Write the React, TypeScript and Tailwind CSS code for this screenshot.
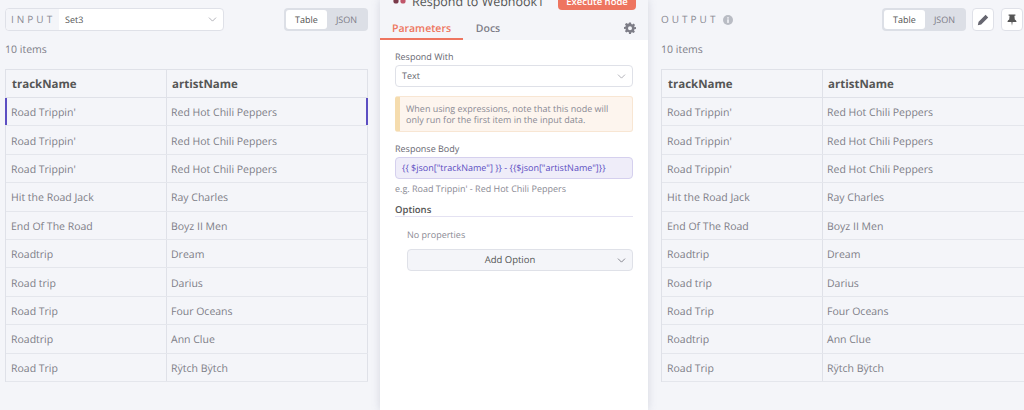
import React from "react";
import { ChevronDown } from "lucide-react";

const rows: [string, string][] = [
  ["Road Trippin'", "Red Hot Chili Peppers"],
  ["Road Trippin'", "Red Hot Chili Peppers"],
  ["Road Trippin'", "Red Hot Chili Peppers"],
  ["Hit the Road Jack", "Ray Charles"],
  ["End Of The Road", "Boyz II Men"],
  ["Roadtrip", "Dream"],
  ["Road trip", "Darius"],
  ["Road Trip", "Four Oceans"],
  ["Roadtrip", "Ann Clue"],
  ["Road Trip", "Rÿtch Bÿtch"],
];

function DataTable({ highlight, widthClass }: { highlight?: boolean; widthClass: string }) {
  return (
    <div className={`${widthClass} border-t border-l border-[#dfe1e8]`}>
      <div className="flex h-[28px] border-b border-[#dfe1e8] text-[11.5px] font-bold text-[#555555]">
        <div className="w-[161px] shrink-0 pl-[6px] pt-[2px] flex items-center border-r border-[#dfe1e8]">trackName</div>
        <div className="flex-1 pl-[5px] pt-[2px] flex items-center border-r border-[#dfe1e8]">artistName</div>
      </div>
      {rows.map((r, i) => (
        <div key={i} className="flex h-[28.4px] border-b border-b-[#e4e6ec] text-[10.5px] text-[#7d7d87]">
          <div className={`shrink-0 pt-[5px] flex items-center border-r border-[#dfe1e8] ${highlight && i === 0 ? "w-[162px] border-l-2 border-l-[#5c4ec2] pl-[4px] -ml-px" : "w-[161px] pl-[5px]"}`}>
            {r[0]}
          </div>
          <div className={`flex-1 pl-[4px] pt-[5px] flex items-center border-r ${highlight && i === 0 ? "border-r-2 border-r-[#5c4ec2]" : "border-r-[#dfe1e8]"}`}>
            {r[1]}
          </div>
        </div>
      ))}
    </div>
  );
}

function Toggle() {
  return (
    <div className="flex h-[23px] rounded-[4px] bg-[#dcdfe6] p-[2px] text-[9px]">
      <div className="w-[41px] rounded-[3px] bg-white flex items-center justify-center font-medium text-[#555555]">Table</div>
      <div className="w-[39px] flex items-center justify-center text-[#7d7d87]">JSON</div>
    </div>
  );
}

function IconButton({ children }: { children: React.ReactNode }) {
  return (
    <div className="w-[22px] h-[23px] rounded-[4px] bg-white border border-[#dfe1e8] flex items-center justify-center text-[#555555]">
      {children}
    </div>
  );
}

export default function App() {
  return (
    <div className="w-[1024px] h-[410px] overflow-hidden bg-[#f4f5f9] flex font-['Open_Sans','Noto_Sans',sans-serif] [text-rendering:geometricPrecision] whitespace-nowrap">
      <div className="w-[380px] shrink-0 pl-[5px] pr-[12px] pt-[8px]">
        <div className="flex items-center justify-between h-[23px]">
          <div className="flex h-[23px] w-[219px] rounded-[4px] border border-[#dfe1e8] bg-white text-[9px]">
            <div className="w-[53px] bg-[#f4f5f9] rounded-l-[4px] flex items-center pl-[5px] tracking-[3px] text-[#8a8a94] text-[10px]">INPUT</div>
            <div className="flex-1 flex items-center justify-between pl-[6px] pr-[4px] text-[#555555]">
              <span>Set3</span>
              <ChevronDown size={13} strokeWidth={1.2} className="text-[#8a8a94]" />
            </div>
          </div>
          <Toggle />
        </div>
        <div className="mt-[12px] h-[16px] flex items-center text-[10.5px] text-[#7d7d87]">10 items</div>
        <div className="mt-[10px]">
          <DataTable highlight widthClass="w-[363px]" />
        </div>
      </div>

      <div className="w-[268px] shrink-0 bg-white shadow-[0_0_8px_rgba(120,125,150,0.25)] flex flex-col">
        <div className="bg-[#f4f5f9] h-[40px] shrink-0 flex flex-col">
          <div className="h-[10px] flex items-start justify-between pl-[13px] pr-[12px] overflow-hidden">
            <div className="flex items-center gap-[6px] -mt-[6px] h-[16px]">
              <svg width="13" height="10" viewBox="0 0 13 10">
                <circle cx="3" cy="4" r="2.6" fill="#7a3a4a" />
                <circle cx="10" cy="4" r="2.6" fill="#c0566a" />
              </svg>
              <span className="text-[12.5px] text-[#555555] leading-none">Respond to Webhook1</span>
            </div>
            <div className="h-[10px] w-[78px] rounded-b-[4px] bg-[#ee7560] flex items-end justify-center text-[9.5px] font-semibold text-white leading-none overflow-hidden">
              <span className="mb-[4px]">Execute node</span>
            </div>
          </div>
          <div className="flex-1 flex items-end justify-between pr-[12px]">
            <div className="flex text-[10.5px] h-[30px] items-stretch">
              <div className="w-[83px] pt-[12px] flex items-center justify-center text-[#ee7560] border-b-2 border-[#ee7560] font-semibold">Parameters</div>
              <div className="w-[40px] ml-[5px] pt-[12px] pb-[2px] flex items-center justify-center text-[#7d7d87] font-semibold">Docs</div>
            </div>
            <svg className="mb-[6px]" width="12" height="12" viewBox="0 0 24 24" fill="#7d7d87">
              <path fillRule="evenodd" d="M10 1h4l.6 3.1c.7.2 1.4.5 2 .9l2.7-1.8 2.8 2.8-1.8 2.7c.4.6.7 1.3.9 2L24 10v4l-3.1.6c-.2.7-.5 1.4-.9 2l1.8 2.7-2.8 2.8-2.7-1.8c-.6.4-1.3.7-2 .9L14 24h-4l-.6-3.8c-.7-.2-1.4-.5-2-.9l-2.7 1.8-2.8-2.8 1.8-2.7c-.4-.6-.7-1.3-.9-2L0 14v-4l2.8-.6c.2-.7.5-1.4.9-2L1.9 4.7l2.8-2.8 2.7 1.8c.6-.4 1.3-.7 2-.9L10 1zm2 7.5a4 4 0 1 0 0 8 4 4 0 0 0 0-8z" />
            </svg>
          </div>
        </div>

        <div className="flex-1 pl-[15px] pr-[15px] pt-[10px] text-[9px] text-[#7d7d87]">
          <div className="h-[14px] flex items-center text-[#666670]">Respond With</div>
          <div className="mt-[1px] h-[22px] rounded-[4px] border border-[#dfe1e8] flex items-center justify-between pl-[6px] pr-[4px] text-[#666670]">
            <span>Text</span>
            <ChevronDown size={13} strokeWidth={1.2} className="text-[#8a8a94]" />
          </div>
          <div className="mt-[9px] h-[36px] rounded-[3px] bg-[#fdf5ee] border border-[#f8e6d3] border-l-[5px] border-l-[#f5dcae] pl-[6px] flex flex-col justify-center leading-[11.5px] text-[#8a8a94]">
            <div>When using expressions, note that this node will</div>
            <div>only run for the first item in the input data.</div>
          </div>
          <div className="mt-[10px] h-[14px] flex items-center text-[#666670]">Response Body</div>
          <div className="mt-[1px] h-[22px] rounded-[4px] border border-[#d5d0ee] bg-[#efedf9] flex items-center pl-[6px] text-[#5c4ec2]">
            {'{{ $json["trackName"] }} - {{$json["artistName"]}}'}
          </div>
          <div className="mt-[3px] h-[14px] flex items-center text-[#8a8a94]">e.g. Road Trippin' - Red Hot Chili Peppers</div>
          <div className="mt-[6px] h-[15px] flex items-center pt-[3px] text-[9.5px] font-semibold text-[#555555] border-b border-[#e4e2f2]">Options</div>
          <div className="pl-[12px]">
            <div className="mt-[11px] h-[14px] flex items-center text-[#8a8a94]">No properties</div>
            <div className="mt-[7px] h-[22px] rounded-[4px] border border-[#dfe1e8] bg-[#f4f5f9] flex items-center justify-center pr-[20px] relative text-[9.5px] text-[#555555]">
              <span>Add Option</span>
              <ChevronDown size={13} strokeWidth={1.4} className="absolute right-[4px] text-[#666670]" />
            </div>
          </div>
        </div>
      </div>

      <div className="flex-1 pl-[13px] pt-[8px] min-w-0">
        <div className="flex items-center justify-between h-[23px] pr-[1px]">
          <div className="flex items-center gap-[5px]">
            <span className="tracking-[3px] text-[10px] text-[#8a8a94]">OUTPUT</span>
            <svg width="10" height="10" viewBox="0 0 10 10">
              <circle cx="5" cy="5" r="5" fill="#b9bcc4" />
              <rect x="4.2" y="4.3" width="1.6" height="3.6" fill="#f4f5f9" />
              <rect x="4.2" y="2.2" width="1.6" height="1.4" fill="#f4f5f9" />
            </svg>
          </div>
          <div className="flex items-center gap-[6px]">
            <Toggle />
            <IconButton>
              <svg width="12" height="12" viewBox="0 0 12 12" fill="#666670">
                <path d="M8.6 .8l2.6 2.6-7 7L.8 11.2l.8-3.4 7-7z" />
              </svg>
            </IconButton>
            <div className="ml-[1px]">
              <IconButton>
                <svg width="10" height="12" viewBox="0 0 10 12" fill="#555555">
                  <path d="M1.6 0.5h6.8v1.3H7.4l.4 3.8c1 .5 1.7 1.3 1.7 2.4H5.6L5 11.8 4.4 8H.5c0-1.1.7-1.9 1.7-2.4l.4-3.8H1.6V.5z" />
                </svg>
              </IconButton>
            </div>
          </div>
        </div>
        <div className="mt-[12px] h-[16px] flex items-center text-[10.5px] text-[#7d7d87]">10 items</div>
        <div className="mt-[10px]">
          <DataTable widthClass="w-[364px]" />
        </div>
      </div>
    </div>
  );
}
